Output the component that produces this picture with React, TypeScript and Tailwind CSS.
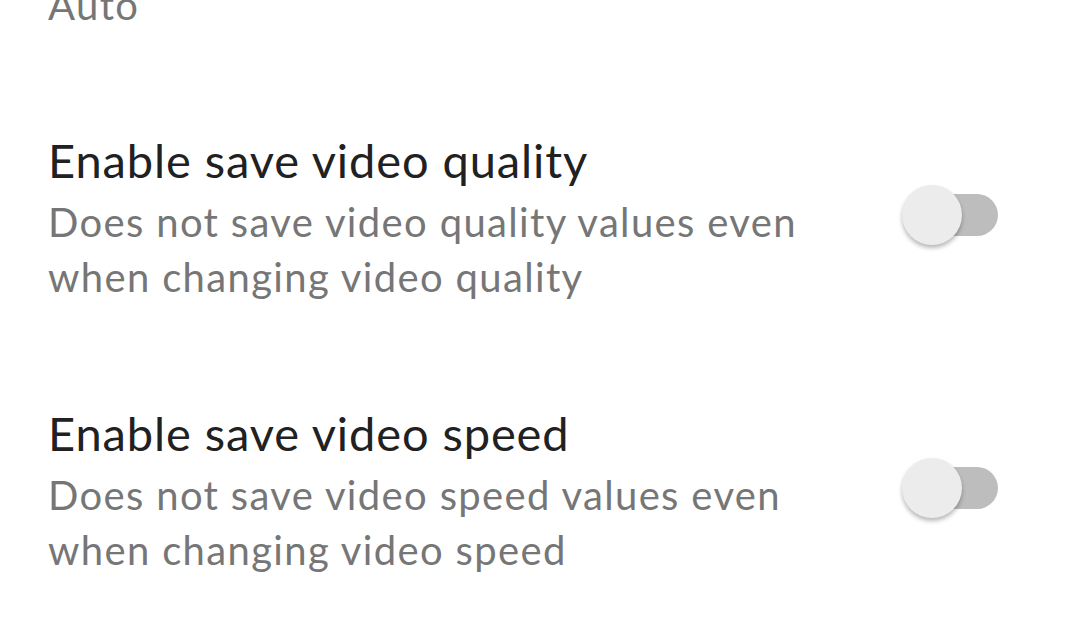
import React from "react";

function Toggle() {
  return (
    <div className="relative w-[96px] h-[62px] mt-[52px] flex items-center shrink-0">
      <div className="absolute left-[3px] right-0 h-[42px] rounded-full bg-[#bdbdbd]" />
      <div className="absolute left-0 w-[60px] h-[60px] rounded-full bg-[#ececec] shadow-[0_3px_4px_rgba(0,0,0,0.28)]" />
    </div>
  );
}

function Row({ title, desc1, desc2 }: { title: string; desc1: string; desc2: string }) {
  return (
    <div className="flex items-start pl-[48px] pr-[82px]">
      <div className="flex-1">
        <div className="text-[47px] leading-[56px] text-[#212121] tracking-[0.9px]">{title}</div>
        <div className="mt-[7px] text-[40px] leading-[55px] text-[#767676] tracking-[1.35px]">
          <div>{desc1}</div>
          <div>{desc2}</div>
        </div>
      </div>
      <Toggle />
    </div>
  );
}

export default function App() {
  return (
    <div className="w-[1080px] h-[635px] overflow-hidden bg-white" style={{ fontFamily: "Lato, sans-serif" }}>
      <div className="pl-[48px] -mt-[22px] text-[40px] leading-[55px] text-[#767676] tracking-[1.4px]">Auto</div>
      <div className="mt-[99px]">
        <Row title="Enable save video quality" desc1="Does not save video quality values even" desc2="when changing video quality" />
      </div>
      <div className="mt-[100px]">
        <Row title="Enable save video speed" desc1="Does not save video speed values even" desc2="when changing video speed" />
      </div>
    </div>
  );
}
